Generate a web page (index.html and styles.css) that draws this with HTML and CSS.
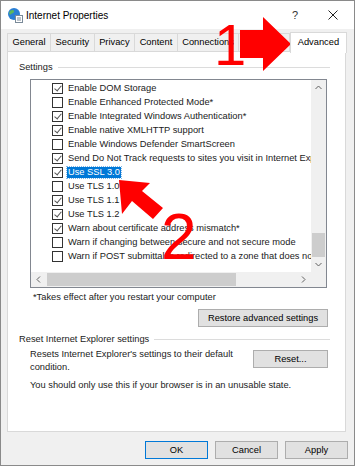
FILE: index.html
```html
<!DOCTYPE html>
<html lang="en">
<head>
    <meta charset="UTF-8">
    <title>Internet Properties</title>
    <link rel="stylesheet" href="styles.css">
</head>
<body>

    <div class="window">
        <!-- Title Bar -->
        <div class="titlebar">
            <svg class="app-icon" width="16" height="16" viewBox="0 0 16 16">
                <circle cx="7" cy="7" r="6" fill="#2a7fd4"/>
                <path d="M3 4 C5 2 8 3 7 5 C6 7 4 6 3 8 C2 7 2 5 3 4 Z" fill="#5cb85c"/>
                <path d="M8 9 C9 8 11 8 12 9 L11 11 C10 11 9 10 8 9 Z" fill="#5cb85c"/>
                <rect x="8.5" y="8.5" width="7" height="7" fill="#fff" stroke="#7a8a99"/>
                <line x1="10" y1="11" x2="14" y2="11" stroke="#7a8a99"/>
                <line x1="10" y1="13" x2="14" y2="13" stroke="#7a8a99"/>
            </svg>
            <span class="title">Internet Properties</span>
            <span class="help">?</span>
            <svg class="close" width="10" height="10" viewBox="0 0 10 10">
                <path d="M0.5 0.5 L9.5 9.5 M9.5 0.5 L0.5 9.5" stroke="#222" stroke-width="1"/>
            </svg>
        </div>

        <!-- Tabs -->
        <div class="tabs">
            <div class="tab">General</div>
            <div class="tab">Security</div>
            <div class="tab">Privacy</div>
            <div class="tab">Content</div>
            <div class="tab">Connections</div>
            <div class="tab">Programs</div>
            <div class="tab active">Advanced</div>
        </div>

        <!-- Advanced Panel -->
        <div class="panel">
            <div class="group-head">
                <span>Settings</span>
                <div class="group-line"></div>
            </div>

            <div class="listbox">
                <div class="rows">
                    <div class="item"><span class="cb on"></span><span class="label">Enable DOM Storage</span></div>
                    <div class="item"><span class="cb"></span><span class="label">Enable Enhanced Protected Mode*</span></div>
                    <div class="item"><span class="cb on"></span><span class="label">Enable Integrated Windows Authentication*</span></div>
                    <div class="item"><span class="cb on"></span><span class="label">Enable native XMLHTTP support</span></div>
                    <div class="item"><span class="cb"></span><span class="label">Enable Windows Defender SmartScreen</span></div>
                    <div class="item"><span class="cb on"></span><span class="label">Send Do Not Track requests to sites you visit in Internet Explorer</span></div>
                    <div class="item selected"><span class="cb on"></span><span class="label">Use SSL 3.0</span></div>
                    <div class="item"><span class="cb"></span><span class="label">Use TLS 1.0</span></div>
                    <div class="item"><span class="cb on"></span><span class="label">Use TLS 1.1</span></div>
                    <div class="item"><span class="cb on"></span><span class="label">Use TLS 1.2</span></div>
                    <div class="item"><span class="cb on"></span><span class="label">Warn about certificate address mismatch*</span></div>
                    <div class="item"><span class="cb"></span><span class="label">Warn if changing between secure and not secure mode</span></div>
                    <div class="item"><span class="cb"></span><span class="label">Warn if POST submittal is redirected to a zone that does not permit posts</span></div>
                </div>
                <div class="vscroll">
                    <div class="sb-btn">
                        <svg width="7" height="5" viewBox="0 0 7 5"><path d="M0.5 4 L3.5 1 L6.5 4" fill="none" stroke="#606060"/></svg>
                    </div>
                    <div class="v-track"><div class="v-thumb"></div></div>
                    <div class="sb-btn">
                        <svg width="7" height="5" viewBox="0 0 7 5"><path d="M0.5 1 L3.5 4 L6.5 1" fill="none" stroke="#606060"/></svg>
                    </div>
                </div>
                <div class="hscroll">
                    <div class="sb-btn">
                        <svg width="5" height="7" viewBox="0 0 5 7"><path d="M4 0.5 L1 3.5 L4 6.5" fill="none" stroke="#606060"/></svg>
                    </div>
                    <div class="h-track"><div class="h-thumb"></div></div>
                    <div class="sb-btn">
                        <svg width="5" height="7" viewBox="0 0 5 7"><path d="M1 0.5 L4 3.5 L1 6.5" fill="none" stroke="#606060"/></svg>
                    </div>
                </div>
                <div class="corner"></div>
            </div>

            <p class="note">*Takes effect after you restart your computer</p>
            <div class="actions">
                <button class="btn btn-restore">Restore advanced settings</button>
            </div>

            <div class="group-head reset-head">
                <span>Reset Internet Explorer settings</span>
                <div class="group-line"></div>
            </div>
            <div class="reset-row">
                <p>Resets Internet Explorer's settings to their default<br>condition.</p>
                <button class="btn btn-reset">Reset...</button>
            </div>
            <p class="warning">You should only use this if your browser is in an unusable state.</p>
        </div>

        <!-- Dialog Buttons -->
        <div class="footer">
            <button class="btn btn-dialog default">OK</button>
            <button class="btn btn-dialog">Cancel</button>
            <button class="btn btn-dialog">Apply</button>
        </div>
    </div>

    <!-- Red Annotations -->
    <svg class="marks" width="355" height="466" viewBox="0 0 355 466">
        <polygon points="240,30 263,30 263,17 291,44 263,71 263,58 240,58" fill="#ff0000"/>
        <polygon points="119,180 150,183 142,191 163,208 153,219 132,201 122,214" fill="#ff0000"/>
    </svg>
    <span class="mark mark-one">1</span>
    <span class="mark mark-two">2</span>

</body>
</html>
```

FILE: styles.css
```css
/* Page */
body {
    margin: 0;
    font-family: "Liberation Sans", Arial, sans-serif;
    font-size: 9.3px;
    color: #000;
}

p {
    margin: 0;
}

/* Dialog Window */
.window {
    width: 355px;
    height: 466px;
    box-sizing: border-box;
    border: 1px solid #8a8a8a;
    background: #f0f0f0;
    display: flex;
    flex-direction: column;
    overflow: hidden;
}

/* Title Bar */
.titlebar {
    height: 28px;
    flex-shrink: 0;
    background: #ffffff;
    display: flex;
    align-items: center;
    padding-left: 6px;
}

.app-icon {
    margin-right: 3px;
}

.title {
    font-size: 10px;
}

.help {
    margin-left: auto;
    margin-right: 30px;
    font-size: 11px;
    color: #333;
}

.close {
    margin-right: 16px;
}

/* Tabs */
.tabs {
    display: flex;
    align-items: flex-start;
    height: 19px;
    padding: 3px 0 0 6px;
    flex-shrink: 0;
}

.tab {
    height: 18px;
    box-sizing: border-box;
    margin-top: 1px;
    margin-right: -1px;
    padding: 0 4.5px;
    line-height: 17px;
    border: 1px solid #d9d9d9;
    border-bottom: none;
    white-space: nowrap;
}

.tab.active {
    position: relative;
    z-index: 1;
    height: 21px;
    margin-top: 0;
    margin-left: 1px;
    padding: 0 7px;
    line-height: 18px;
    background: #ffffff;
}

/* Tab Panel */
.panel {
    height: 381px;
    box-sizing: border-box;
    margin: 0 8px 0 6px;
    background: #ffffff;
    border: 1px solid #d9d9d9;
    flex-shrink: 0;
}

.group-head {
    display: flex;
    align-items: center;
    margin: 9px 15px 0 11px;
    line-height: 12px;
    color: #222;
}

.group-line {
    flex: 1;
    height: 1px;
    margin-left: 5px;
    background: #dcdcdc;
}

/* Settings List */
.listbox {
    height: 209px;
    box-sizing: border-box;
    margin: 6px 18px 0 22px;
    border: 1px solid #828790;
    display: grid;
    grid-template-columns: 1fr 15px;
    grid-template-rows: 1fr 15px;
}

.rows {
    overflow: hidden;
    padding-top: 1px;
}

.item {
    height: 14px;
    display: flex;
    align-items: center;
    padding-left: 21px;
    white-space: nowrap;
    color: #1a1a1a;
}

.cb {
    position: relative;
    width: 11px;
    height: 11px;
    box-sizing: border-box;
    border: 1px solid #333;
    margin-right: 4px;
    flex-shrink: 0;
}

.cb.on::after {
    content: "";
    position: absolute;
    left: 3px;
    top: 0;
    width: 3px;
    height: 6px;
    border: solid #555;
    border-width: 0 1px 1px 0;
    transform: rotate(40deg);
}

.label {
    padding: 0 1px;
    line-height: 11px;
}

.item.selected .label {
    background: #0078d7;
    color: #ffffff;
    outline: 1px dotted #7fb6e6;
}

/* Scrollbars */
.vscroll,
.hscroll,
.corner {
    background: #f0f0f0;
}

.vscroll {
    display: flex;
    flex-direction: column;
}

.hscroll {
    display: flex;
}

.sb-btn {
    width: 15px;
    height: 15px;
    display: flex;
    align-items: center;
    justify-content: center;
    flex-shrink: 0;
}

.v-track {
    flex: 1;
    padding-top: 138px;
}

.v-thumb {
    height: 24px;
    margin: 0 1px;
    background: #cdcdcd;
}

.h-track {
    flex: 1;
    padding: 1px 0 0 1px;
}

.h-thumb {
    width: 189px;
    height: 13px;
    background: #cdcdcd;
}

/* Notes and Buttons */
.note {
    margin: 3px 0 0 25px;
    line-height: 12px;
    color: #222;
}

.actions {
    display: flex;
    justify-content: flex-end;
    margin: 6px 17px 0 0;
}

.btn {
    height: 18px;
    box-sizing: border-box;
    padding: 0;
    border: 1px solid #adadad;
    background: #e1e1e1;
    font-family: inherit;
    font-size: 9.3px;
    color: #000;
}

.btn-restore {
    width: 130px;
}

.reset-head {
    margin-top: 6px;
}

.reset-row {
    display: flex;
    justify-content: space-between;
    align-items: flex-start;
    margin: 3px 17px 0 22px;
    line-height: 13px;
    color: #222;
}

.btn-reset {
    width: 75px;
    margin-top: 2px;
}

.warning {
    margin: 5px 0 0 22px;
    line-height: 12px;
    color: #222;
}

/* Dialog Footer */
.footer {
    display: flex;
    justify-content: flex-end;
    gap: 7px;
    padding: 9px 6px 0 0;
}

.btn-dialog {
    width: 63px;
}

.btn-dialog.default {
    border-color: #0078d7;
}

/* Red Annotations */
.marks {
    position: absolute;
    top: 0;
    left: 0;
    pointer-events: none;
}

.mark {
    position: absolute;
    color: #ff0000;
    font-family: "Liberation Sans", Arial, sans-serif;
}

.mark-one {
    left: 214px;
    top: 16px;
    font-size: 58px;
    line-height: 58px;
}

.mark-two {
    left: 161px;
    top: 205px;
    font-size: 64px;
    line-height: 64px;
}
```
